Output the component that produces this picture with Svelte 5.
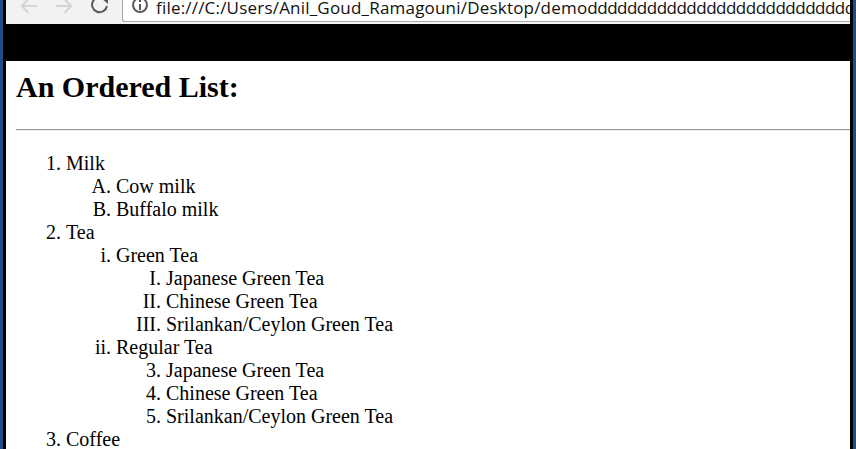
<script>
    const milkTypes = ['Cow milk', 'Buffalo milk'];
    const teaKinds = ['Japanese Green Tea', 'Chinese Green Tea', 'Srilankan/Ceylon Green Tea'];
    const addressPath = 'file:///C:/Users/Anil_Goud_Ramagouni/Desktop/demo';
    const addressName = 'd'.repeat(27) + '.html';
</script>

<div class="window">
    <header class="toolbar">
        <svg class="nav" width="16" height="14" viewBox="0 0 16 14">
            <path d="M16 6H1.500M7.500 -1 1 6 7.500 13" />
        </svg>
        <svg class="nav" width="16" height="14" viewBox="0 0 16 14">
            <path d="M0 6H14.500M8.500 -1 15 6 8.500 13" />
        </svg>
        <svg class="reload" width="18" height="14" viewBox="0 0 18 14">
            <path d="M13.500 -1A7.500 7.500 0 1 0 16 6" />
            <path class="tip" d="M10 -2H17V4Z" />
        </svg>
        <div class="omnibox">
            <svg width="16" height="14" viewBox="0 0 16 14">
                <circle cx="8" cy="5" r="7" />
                <path d="M8 4V10M8 0V2" />
            </svg>
            <span class="url"><span class="path">{addressPath}</span><span class="name">{addressName}</span></span>
        </div>
    </header>
    <div class="strip"></div>
    <main>
        <h2>An Ordered List:</h2>
        <hr />
        <ol>
            <li>Milk
                <ol type="A">
                    {#each milkTypes as milk}
                        <li>{milk}</li>
                    {/each}
                </ol>
            </li>
            <li>Tea
                <ol type="i">
                    <li>Green Tea
                        <ol type="I">
                            {#each teaKinds as tea}
                                <li>{tea}</li>
                            {/each}
                        </ol>
                    </li>
                    <li>Regular Tea
                        <ol start="3">
                            {#each teaKinds as tea}
                                <li>{tea}</li>
                            {/each}
                        </ol>
                    </li>
                </ol>
            </li>
            <li>Coffee</li>
        </ol>
    </main>
</div>

<style>
    :global(body) {
        margin: 0;
        background: #1f4e85;
    }

    .window {
        height: 449px;
        margin: 0 3px;
        padding: 0 3px;
        background: #000;
        overflow: hidden;
        display: flex;
        flex-direction: column;
    }

    .toolbar {
        height: 24px;
        flex: none;
        padding-left: 15px;
        background: #f2f2f2;
        display: flex;
        align-items: flex-start;
        box-sizing: border-box;
    }

    svg path, svg circle {
        fill: none;
        stroke-width: 2;
    }

    .nav {
        flex: none;
        margin-right: 19px;
    }

    .nav path {
        stroke: #d4d4d4;
    }

    .reload {
        flex: none;
        margin-right: 13px;
    }

    .reload path {
        stroke: #5a5a5a;
    }

    .reload .tip {
        fill: #5a5a5a;
        stroke: none;
    }

    .omnibox {
        height: 21px;
        flex: 1;
        min-width: 0;
        background: #fff;
        border: 1px solid #a9a9a9;
        border-top: 0;
        border-right: 0;
        border-radius: 0 0 0 3px;
        display: flex;
        align-items: flex-start;
        gap: 8px;
        padding-left: 9px;
        overflow: hidden;
        font: 17px/16px "Open Sans", "Liberation Sans", sans-serif;
        color: #111;
        white-space: nowrap;
    }

    .omnibox svg {
        flex: none;
    }

    .omnibox circle, .omnibox path {
        stroke: #5a5a5a;
    }

    .url {
        display: block;
    }

    .path {
        letter-spacing: 0.2px;
    }

    .name {
        letter-spacing: -0.5px;
    }

    .strip {
        height: 37px;
        flex: none;
        background: #000;
    }

    main {
        flex: 1;
        background: #fff;
        padding: 8px 0 0 10px;
        font: 20px/23px "Liberation Serif", "Times New Roman", serif;
        color: #000;
    }

    h2 {
        font-size: 30px;
        line-height: 34px;
        margin: 1px 0 25px;
    }

    hr {
        margin: 0 0 21px;
        border: 0;
        border-top: 1px solid #9a9a9a;
        border-bottom: 1px solid #eee;
    }

    ol {
        margin: 0;
        padding-left: 50px;
    }
</style>
